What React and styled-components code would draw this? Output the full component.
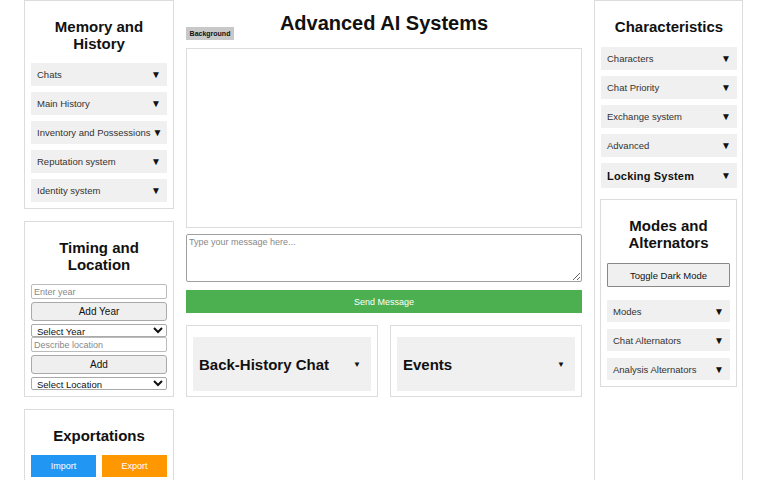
import React from "react";
import styled, { createGlobalStyle } from "styled-components";

const GlobalStyle = createGlobalStyle`
  html, body {
    margin: 0;
    padding: 0;
    background: #fff;
    font-family: "Liberation Sans", Arial, sans-serif;
    color: #111;
  }
`;

const memoryItems = [
  "Chats",
  "Main History",
  "Inventory and Possessions",
  "Reputation system",
  "Identity system",
];

const characteristicItems = ["Characters", "Chat Priority", "Exchange system", "Advanced"];

const modeItems = ["Modes", "Chat Alternators", "Analysis Alternators"];

function App() {
  return (
    <>
      <GlobalStyle />
      <Page>
        <SideColumn>
          <Panel>
            <PanelTitle>Memory and History</PanelTitle>
            <ItemList>
              {memoryItems.map((item) => (
                <Dropdown key={item}>
                  <span>{item}</span>
                  <Arrow>▼</Arrow>
                </Dropdown>
              ))}
            </ItemList>
          </Panel>

          <Panel>
            <PanelTitle>Timing and Location</PanelTitle>
            <FormStack>
              <TextInput placeholder="Enter year" />
              <GrayButton>Add Year</GrayButton>
              <Select defaultValue="">
                <option value="">Select Year</option>
              </Select>
              <TextInput placeholder="Describe location" />
              <GrayButton>Add</GrayButton>
              <Select defaultValue="">
                <option value="">Select Location</option>
              </Select>
            </FormStack>
          </Panel>

          <Panel>
            <PanelTitle>Exportations</PanelTitle>
            <ButtonRow>
              <ColorButton color="#2196f3">Import</ColorButton>
              <ColorButton color="#ff9800">Export</ColorButton>
            </ButtonRow>
          </Panel>
        </SideColumn>

        <Main>
          <BackgroundButton>Background</BackgroundButton>
          <MainTitle>Advanced AI Systems</MainTitle>
          <ChatBox />
          <MessageInput placeholder="Type your message here..." />
          <SendButton>Send Message</SendButton>
          <LowerRow>
            <LowerPanel>
              <BigDropdown>
                <span>Back-History Chat</span>
                <SmallArrow>▼</SmallArrow>
              </BigDropdown>
            </LowerPanel>
            <LowerPanel>
              <BigDropdown>
                <span>Events</span>
                <SmallArrow>▼</SmallArrow>
              </BigDropdown>
            </LowerPanel>
          </LowerRow>
        </Main>

        <RightPanel>
          <PanelTitle>Characteristics</PanelTitle>
          <ItemList>
            {characteristicItems.map((item) => (
              <Dropdown key={item}>
                <span>{item}</span>
                <Arrow>▼</Arrow>
              </Dropdown>
            ))}
            <Dropdown strong>
              <span>Locking System</span>
              <Arrow>▼</Arrow>
            </Dropdown>
          </ItemList>

          <ModesPanel>
            <PanelTitle>Modes and Alternators</PanelTitle>
            <ToggleButton>Toggle Dark Mode</ToggleButton>
            <ItemList>
              {modeItems.map((item) => (
                <Dropdown key={item}>
                  <span>{item}</span>
                  <Arrow>▼</Arrow>
                </Dropdown>
              ))}
            </ItemList>
          </ModesPanel>
        </RightPanel>
      </Page>
    </>
  );
}

export default App;

const Page = styled.div`
  display: flex;
  align-items: flex-start;
  gap: 12px;
  padding: 0 24px;
  height: 480px;
  overflow: hidden;
`;

const SideColumn = styled.div`
  width: 150px;
  flex-shrink: 0;
  display: flex;
  flex-direction: column;
  gap: 12px;
`;

const Panel = styled.section`
  border: 1px solid #dcdcdc;
  padding: 0 6px 6px;
  background: #fff;
`;

const PanelTitle = styled.h2`
  margin: 17px 8px 11px;
  font-size: 15px;
  line-height: 17px;
  font-weight: bold;
  text-align: center;
  color: #111;
`;

const ItemList = styled.div`
  display: flex;
  flex-direction: column;
  gap: 6px;
`;

const Dropdown = styled.div`
  display: flex;
  align-items: center;
  justify-content: space-between;
  height: ${(p) => (p.strong ? "25px" : "23px")};
  padding: 0 6px 0 6px;
  background: #f0f0f0;
  font-size: ${(p) => (p.strong ? "11px" : "9.5px")};
  font-weight: ${(p) => (p.strong ? "bold" : "normal")};
  letter-spacing: ${(p) => (p.strong ? "0.2px" : "0")};
  color: ${(p) => (p.strong ? "#111" : "#333")};
  white-space: nowrap;
`;

const Arrow = styled.span`
  font-size: 10px;
  color: #111;
  margin-left: 2px;
`;

const FormStack = styled.div`
  display: flex;
  flex-direction: column;
`;

const TextInput = styled.input`
  box-sizing: border-box;
  width: 100%;
  height: 15px;
  margin: 0;
  padding: 0 2px;
  border: 1px solid #bbb;
  border-radius: 2px;
  font-family: "Liberation Sans", Arial, sans-serif;
  font-size: 9px;
  &::placeholder {
    color: #888;
  }
`;

const GrayButton = styled.button`
  box-sizing: border-box;
  width: 100%;
  height: 19px;
  margin: 3px 0;
  border: 1px solid #aaa;
  border-radius: 3px;
  background: #efefef;
  font-family: "Liberation Sans", Arial, sans-serif;
  font-size: 10px;
  color: #111;
`;

const Select = styled.select`
  box-sizing: border-box;
  width: 100%;
  height: 13px;
  margin: 0;
  padding: 0 1px;
  border: 1px solid #aaa;
  border-radius: 2px;
  background: #fff;
  font-family: "Liberation Sans", Arial, sans-serif;
  font-size: 9.5px;
  line-height: 11px;
  color: #111;
`;

const ButtonRow = styled.div`
  display: flex;
  gap: 6px;
`;

const ColorButton = styled.button`
  flex: 1;
  height: 22px;
  border: none;
  background: ${(p) => p.color};
  color: #fff;
  font-family: "Liberation Sans", Arial, sans-serif;
  font-size: 9px;
`;

const Main = styled.main`
  position: relative;
  width: 396px;
  flex-shrink: 0;
  display: flex;
  flex-direction: column;
`;

const BackgroundButton = styled.button`
  position: absolute;
  top: 27px;
  left: 0;
  width: 48px;
  height: 13px;
  padding: 0;
  border: none;
  background: #c8c8c8;
  font-family: "Liberation Sans", Arial, sans-serif;
  font-size: 7px;
  font-weight: bold;
  color: #111;
`;

const MainTitle = styled.h1`
  margin: 11px 0 0;
  font-size: 20px;
  line-height: 24px;
  font-weight: bold;
  text-align: center;
  color: #111;
`;

const ChatBox = styled.div`
  margin-top: 13px;
  height: 178px;
  border: 1px solid #dcdcdc;
`;

const MessageInput = styled.textarea`
  box-sizing: border-box;
  margin-top: 6px;
  width: 100%;
  height: 48px;
  padding: 2px 2px;
  border: 1px solid #a0a0a0;
  border-radius: 2px;
  font-family: "Liberation Sans", Arial, sans-serif;
  font-size: 9px;
  resize: vertical;
  &::placeholder {
    color: #888;
  }
`;

const SendButton = styled.button`
  margin-top: 8px;
  height: 23px;
  border: none;
  background: #4caf50;
  color: #fff;
  font-family: "Liberation Sans", Arial, sans-serif;
  font-size: 9px;
`;

const LowerRow = styled.div`
  display: flex;
  gap: 12px;
  margin-top: 12px;
`;

const LowerPanel = styled.div`
  flex: 1;
  border: 1px solid #dcdcdc;
  padding: 11px 6px 5px;
`;

const BigDropdown = styled.div`
  display: flex;
  align-items: center;
  justify-content: space-between;
  height: 54px;
  padding: 0 6px;
  background: #f0f0f0;
  font-size: 15px;
  font-weight: bold;
  color: #111;
`;

const SmallArrow = styled.span`
  font-size: 8px;
  margin-right: 4px;
`;

const RightPanel = styled.aside`
  width: 149px;
  flex-shrink: 0;
  box-sizing: border-box;
  height: 500px;
  border: 1px solid #dcdcdc;
  padding: 0 5px 0 6px;
  & > h2 {
    margin: 17px 8px 12px;
  }
`;

const ModesPanel = styled.section`
  margin: 11px 0 0 -1px;
  border: 1px solid #dcdcdc;
  padding: 0 6px 6px;
  & > h2 {
    margin: 17px 8px 12px;
  }
  & ${Dropdown} {
    height: 22px;
  }
  & ${ItemList} {
    gap: 7px;
  }
`;

const ToggleButton = styled.button`
  box-sizing: border-box;
  width: 100%;
  height: 24px;
  margin-bottom: 13px;
  border: 1px solid #888;
  border-radius: 1px;
  background: #f0f0f0;
  font-family: "Liberation Sans", Arial, sans-serif;
  font-size: 9.5px;
  color: #111;
`;
